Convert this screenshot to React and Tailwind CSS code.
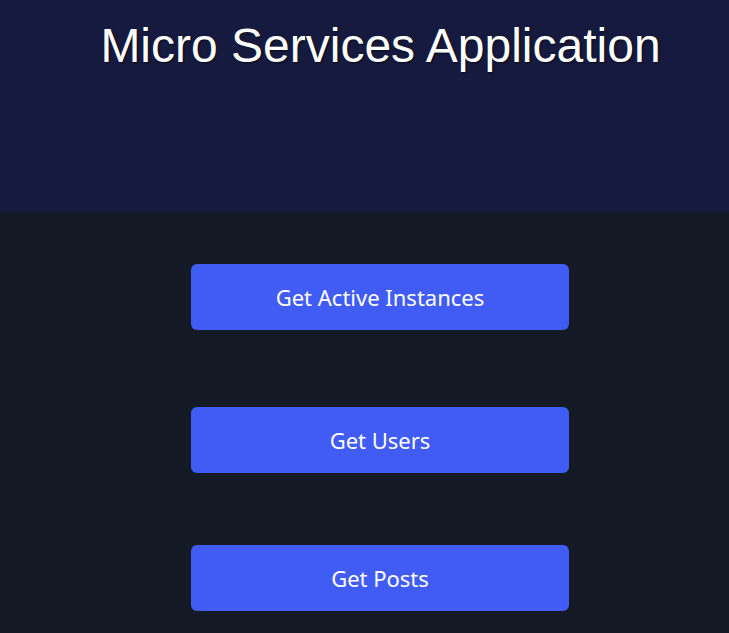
export default function App() {
  const buttons = [
    { label: "Get Active Instances", mt: "mt-[52px]" },
    { label: "Get Users", mt: "mt-[77px]" },
    { label: "Get Posts", mt: "mt-[72px]" },
  ];

  return (
    <div className="min-h-screen bg-[#141a25]">
      <header className="h-[212px] bg-[#161a3e] pl-[32px] pt-[14px] text-center">
        <h1 className="text-[48px] leading-[64px] text-white [font-family:'Liberation_Sans',Arial,sans-serif] [text-shadow:1px_1px_2px_rgba(0,0,0,0.6)]">
          Micro Services Application
        </h1>
      </header>
      <main className="flex flex-col pb-6">
        {buttons.map((b) => (
          <button
            key={b.label}
            className={`${b.mt} ml-[191px] h-[66px] w-[378px] rounded-md bg-[#405cf5] text-[22px] text-white [font-family:'Noto_Sans',sans-serif]`}
          >
            {b.label}
          </button>
        ))}
      </main>
    </div>
  );
}
